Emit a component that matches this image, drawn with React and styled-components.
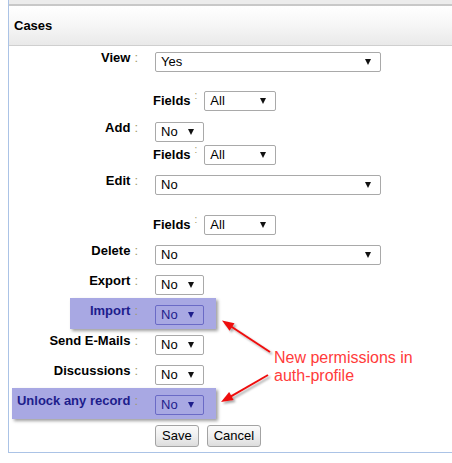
import React from "react";
import styled, { createGlobalStyle, css } from "styled-components";

const GlobalStyle = createGlobalStyle`
  html, body { margin: 0; padding: 0; background: #ffffff; overflow: hidden; }
  body { font-family: "Liberation Sans", Arial, sans-serif; }
`;

const Page = styled.div`
  position: relative;
  width: 452px;
  height: 463px;
  overflow: hidden;
`;

const Panel = styled.div`
  margin-left: 8px;
  width: 470px;
  border-left: 1px solid #abc3e6;
  border-bottom: 1px solid #abc3e6;
`;

const TopStrip = styled.div`
  height: 4px;
  background: #ececec;
  border-bottom: 2px solid #c8c8c8;
`;

const Header = styled.div`
  height: 39px;
  display: flex;
  align-items: center;
  padding-left: 5px;
  background: linear-gradient(to bottom, #ffffff 0%, #f6f6f6 50%, #e9e9e9 100%);
  border-bottom: 1px solid #cfcfcf;
  font-weight: bold;
  font-size: 13px;
  color: #000;
`;

const Body = styled.div`
  display: flex;
  flex-direction: column;
  padding-bottom: 5px;
`;

const Row = styled.div`
  position: relative;
  display: grid;
  grid-template-columns: 129px 1fr;
  column-gap: 17px;
  align-items: start;
  margin-top: ${(p) => (p.$mt ?? 10)}px;

  ${(p) =>
    p.$hlLeft !== undefined &&
    css`
      &::before {
        content: "";
        position: absolute;
        top: -7px;
        left: ${p.$hlLeft}px;
        width: ${207 - p.$hlLeft}px;
        height: 31px;
        background: #a8a8e3;
        box-shadow: 2px 2px 3px rgba(0, 0, 0, 0.38);
      }
    `}

  & > * {
    position: relative;
    z-index: 1;
  }
`;

const Label = styled.div`
  margin-top: -4px;
  text-align: right;
  font-size: 13px;
  line-height: 20px;
  font-weight: bold;
  white-space: nowrap;
  color: ${(p) => (p.$hl ? "#1d1d8c" : "#000")};
`;

const Colon = styled.span`
  font-weight: normal;
  color: #a39a6c;
  margin-left: 4px;
`;

const SmallColon = styled.span`
  font-size: 10px;
  line-height: 10px;
  color: #a39a6c;
  align-self: flex-start;
  margin: 0 7px 0 4px;
`;

const Value = styled.div`
  display: flex;
  align-items: flex-start;
  margin-left: ${(p) => p.$shift || 0}px;
`;

const FieldsText = styled.span`
  font-size: 13px;
  line-height: 20px;
  font-weight: bold;
  color: #000;
`;

const SelectBox = styled.div`
  box-sizing: border-box;
  position: relative;
  width: ${(p) => p.$w}px;
  height: 20px;
  border: 1px solid ${(p) => (p.$hl ? "#6a6ac6" : "#a9a9a9")};
  border-radius: 2px;
  background: ${(p) => (p.$hl ? "transparent" : "#ffffff")};
  padding-left: 5px;
  font-size: 13px;
  line-height: 18px;
  color: ${(p) => (p.$hl ? "#1d1d8c" : "#000")};

  &::after {
    content: "";
    position: absolute;
    right: 9px;
    top: 6px;
    width: 0;
    height: 0;
    border-left: 3.5px solid transparent;
    border-right: 3.5px solid transparent;
    border-top: 6px solid ${(p) => (p.$hl ? "#1d1d8c" : "#111")};
  }
`;

const Buttons = styled.div`
  display: flex;
  gap: 8px;
`;

const Button = styled.button`
  box-sizing: border-box;
  height: 22px;
  padding: 0 6px;
  border: 1px solid #a3a3a3;
  border-radius: 3px;
  background: linear-gradient(to bottom, #fbfbfb 0%, #efefef 50%, #dddddd 100%);
  font-family: "Liberation Sans", Arial, sans-serif;
  font-size: 13px;
  line-height: 20px;
  color: #000;
`;

const Overlay = styled.svg`
  position: absolute;
  left: 0;
  top: 0;
  pointer-events: none;
`;

const Note = styled.div`
  position: absolute;
  left: 274px;
  top: 349px;
  font-size: 16px;
  line-height: 18px;
  color: #ff3b3b;
  white-space: nowrap;
`;

const Select = ({ w, value, hl }) => (
  <SelectBox $w={w} $hl={hl}>
    {value}
  </SelectBox>
);

const Perm = ({ label, value, w = 49, hl, hlLeft, mt }) => (
  <Row $mt={mt} $hlLeft={hlLeft}>
    <Label $hl={hl}>
      {label}
      <Colon>:</Colon>
    </Label>
    <Value>
      <Select w={w} value={value} hl={hl} />
    </Value>
  </Row>
);

const Fields = ({ mt }) => (
  <Row $mt={mt}>
    <span />
    <Value $shift={-2}>
      <FieldsText>Fields</FieldsText>
      <SmallColon>:</SmallColon>
      <Select w={72} value="All" />
    </Value>
  </Row>
);

const Arrow = ({ x1, y1, x2, y2 }) => {
  const dx = x2 - x1;
  const dy = y2 - y1;
  const len = Math.hypot(dx, dy);
  const ux = dx / len;
  const uy = dy / len;
  const hl = 12;
  const hw = 4.5;
  const bx = x2 - ux * hl;
  const by = y2 - uy * hl;
  const px = -uy * hw;
  const py = ux * hw;
  return (
    <g filter="url(#shadow)">
      <line x1={x1} y1={y1} x2={bx + ux * 2} y2={by + uy * 2} stroke="#ee1111" strokeWidth="2" />
      <polygon
        points={`${x2},${y2} ${bx + px},${by + py} ${bx - px},${by - py}`}
        fill="#ee1111"
      />
    </g>
  );
};

export default function App() {
  return (
    <>
      <GlobalStyle />
      <Page>
        <Panel>
          <TopStrip />
          <Header>Cases</Header>
          <Body>
            <Perm label="View" value="Yes" w={226} mt={6} />
            <Fields mt={19} />
            <Perm label="Add" value="No" mt={11} />
            <Fields mt={3} />
            <Perm label="Edit" value="No" w={226} />
            <Fields mt={20} />
            <Perm label="Delete" value="No" w={226} />
            <Perm label="Export" value="No" />
            <Perm label="Import" value="No" hl hlLeft={61} />
            <Perm label="Send E-Mails" value="No" />
            <Perm label="Discussions" value="No" />
            <Perm label="Unlock any record" value="No" hl hlLeft={3} />
            <Row $mt={10}>
              <span />
              <Buttons>
                <Button>Save</Button>
                <Button>Cancel</Button>
              </Buttons>
            </Row>
          </Body>
        </Panel>
        <Overlay width="452" height="463" viewBox="0 0 452 463">
          <defs>
            <filter id="shadow" x="-20%" y="-20%" width="140%" height="140%">
              <feDropShadow dx="2" dy="2" stdDeviation="1.2" floodColor="#000" floodOpacity="0.35" />
            </filter>
          </defs>
          <Arrow x1={270} y1={352} x2={222} y2={320.5} />
          <Arrow x1={268} y1={375} x2={221} y2={402} />
        </Overlay>
        <Note>
          New permissions in
          <br />
          auth-profile
        </Note>
      </Page>
    </>
  );
}
